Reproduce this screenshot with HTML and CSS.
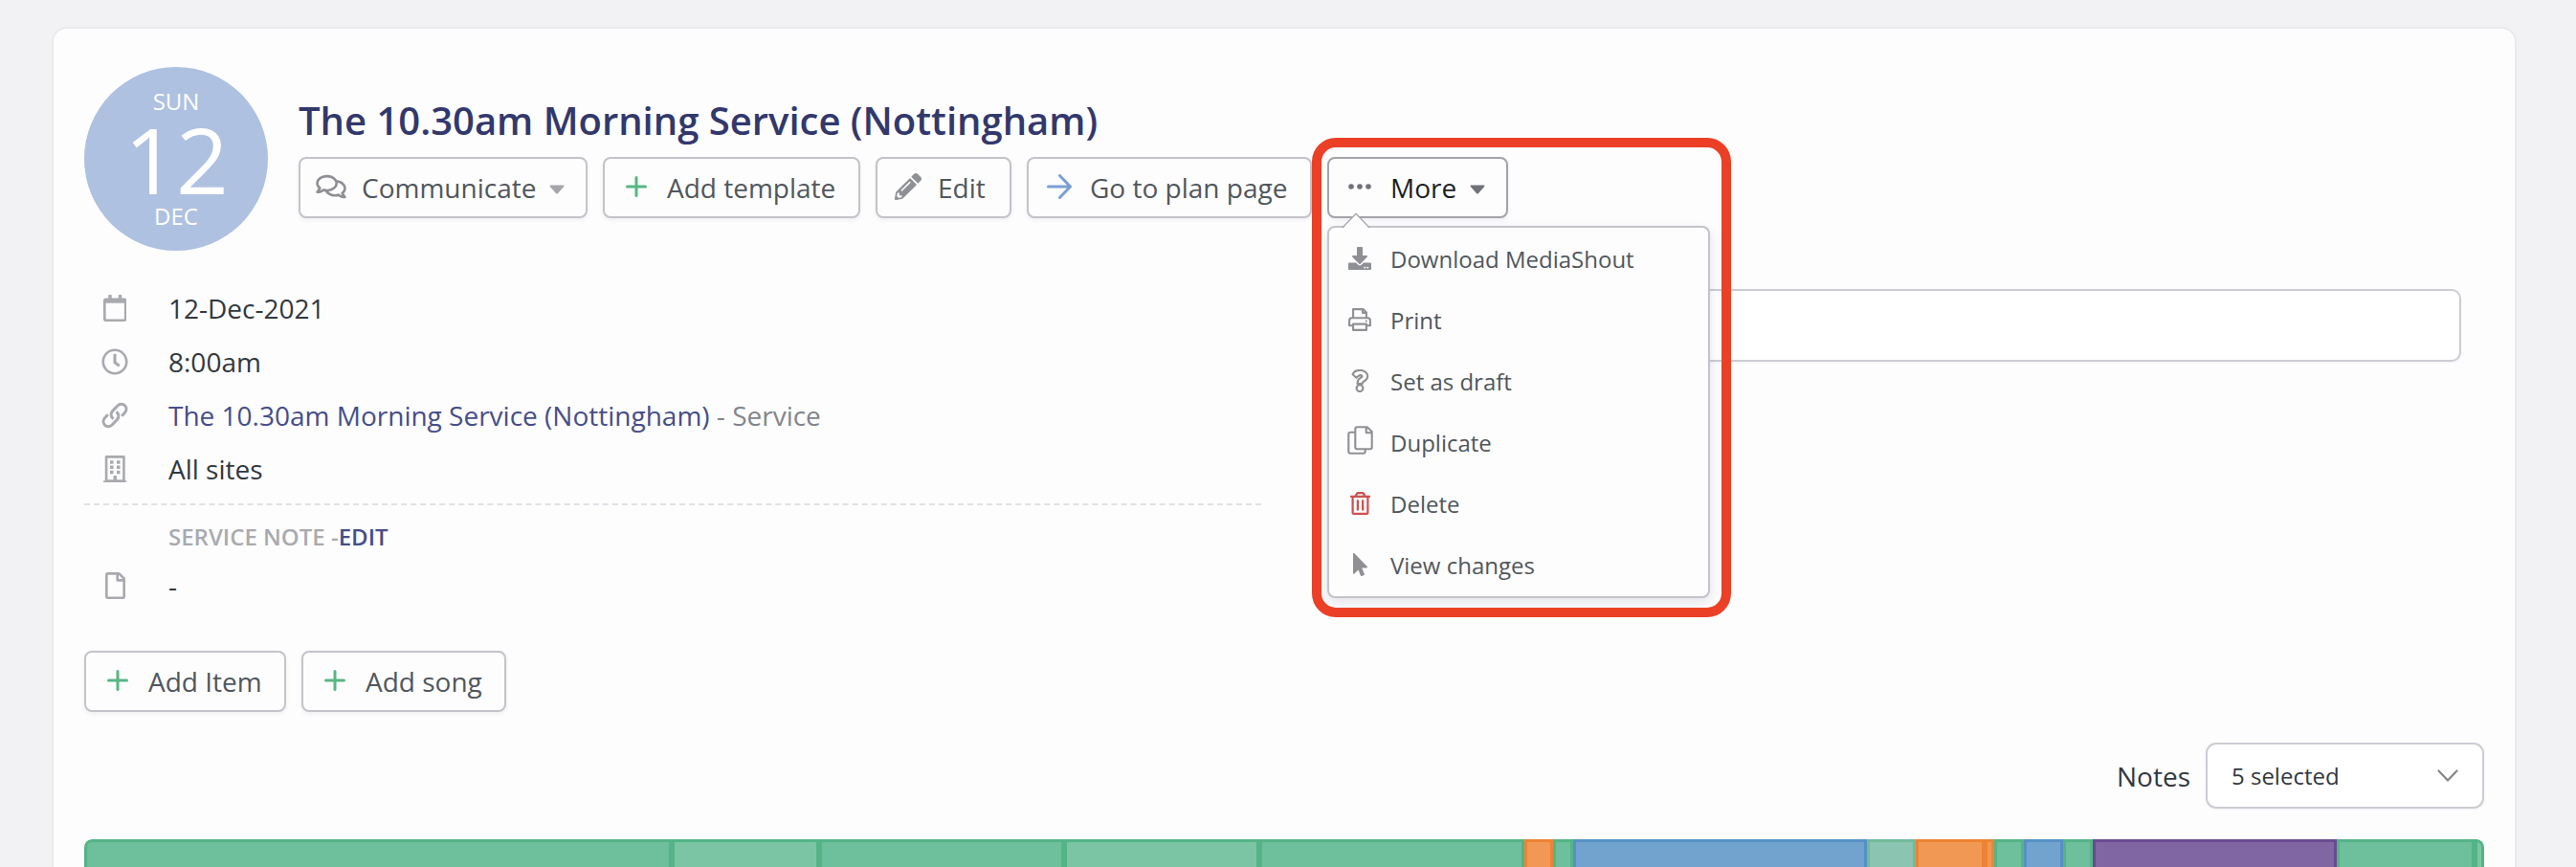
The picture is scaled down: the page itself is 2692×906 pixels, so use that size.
FILE: index.html
```html
<!DOCTYPE html>
<html lang="en">
<head>
<meta charset="utf-8">
<title>The 10.30am Morning Service (Nottingham)</title>
<link rel="stylesheet" href="styles.css">
</head>
<body>
<main class="card">
  <header class="header">
    <div class="date"><span class="date-label">SUN</span><span class="date-day">12</span><span class="date-label">DEC</span></div>
    <div class="heading">
      <h1 class="title"><span>The 10.30am Morning Service (Nottingham)</span></h1>
      <div class="toolbar">
        <button class="btn btn-communicate"><svg class="i-comments" viewBox="0 0 576 512"><path d="M532 386.2c27.5-27.1 44-61.1 44-98.2 0-80-76.5-146.1-176.2-157.9C368.3 72.5 294.3 32 208 32 93.1 32 0 103.6 0 192c0 37 16.5 71 44 98.2-15.3 30.7-37.3 54.5-37.7 54.9-6.3 6.7-8.1 16.5-4.4 25 3.6 8.5 12 14 21.2 14 53.5 0 96.7-20.2 125.2-38.8 9.2 2.1 18.7 3.7 28.4 4.9C208.1 407.6 281.8 448 368 448c20.8 0 40.8-2.4 59.8-6.8C456.3 459.7 499.4 480 553 480c9.2 0 17.5-5.5 21.2-14 3.6-8.5 1.9-18.3-4.4-25-.4-.3-22.5-24.1-37.8-54.8zm-392.8-92.3L122.1 305c-14.1 9.1-28.5 16.3-43.1 21.4 2.7-4.7 5.4-9.7 8-14.8l15.5-31.1L77.7 256C64.2 242.6 48 220.7 48 192c0-60.7 73.3-112 160-112s160 51.3 160 112-73.3 112-160 112c-16.5 0-33-1.9-49-5.6l-19.8-4.5zM498.3 352l-24.7 24.4 15.5 31.1c2.6 5.1 5.3 10.1 8 14.8-14.6-5.1-29-12.3-43.1-21.4l-17.1-11.1-19.9 4.6c-16 3.7-32.5 5.6-49 5.6-54 0-102.2-20.1-131.3-49.7C338 339.5 416 272.9 416 192c0-3.4-.4-6.7-.7-10C479.7 196.5 528 238.8 528 288c0 28.7-16.2 50.6-29.7 64z"/></svg><span>Communicate</span><svg class="caret" viewBox="0 0 16 10"><path d="M1.2.5h13.6q1.2.2.4 1.4L8.8 9.2q-.8.8-1.6 0L.8 1.9Q0 .7 1.2.5z"/></svg></button>
        <button class="btn btn-template"><svg class="i-plus" viewBox="0 0 22 22"><path d="M11 1.5v19M1.5 11h19"/></svg><span>Add template</span></button>
        <button class="btn btn-edit"><svg class="i-pencil" viewBox="0 0 512 512"><path d="M497.9 142.1l-46.1 46.1c-4.7 4.7-12.3 4.7-17 0l-111-111c-4.7-4.7-4.7-12.3 0-17l46.1-46.1c18.7-18.7 49.1-18.7 67.9 0l60.1 60.1c18.8 18.7 18.8 49.1 0 67.9zM284.2 99.8L21.6 362.4.4 483.9c-2.9 16.4 11.4 30.6 27.8 27.8l121.5-21.3 262.6-262.6c4.7-4.7 4.7-12.3 0-17l-111-111c-4.8-4.7-12.4-4.7-17.1 0zM124.1 339.9c-5.5-5.5-5.5-14.3 0-19.8l154-154c5.5-5.5 14.3-5.5 19.8 0s5.5 14.3 0 19.8l-154 154c-5.5 5.5-14.3 5.5-19.8 0zM88 424h48v36.3l-64.5 11.3-31.1-31.1L51.7 376H88v48z"/></svg><span>Edit</span></button>
        <button class="btn btn-plan"><svg class="i-arrow" viewBox="0 0 26 26"><path d="M1.5 13H24M13.5 1.5 24.5 13 13.5 24.5"/></svg><span>Go to plan page</span></button>
        <div class="more">
          <button class="btn btn-more"><svg class="i-dots" viewBox="0 0 24 24"><circle cx="3" cy="12" r="2.8"/><circle cx="12" cy="12" r="2.8"/><circle cx="21" cy="12" r="2.8"/></svg><span>More</span><svg class="caret" viewBox="0 0 16 10"><path d="M1.2.5h13.6q1.2.2.4 1.4L8.8 9.2q-.8.8-1.6 0L.8 1.9Q0 .7 1.2.5z"/></svg></button>
          <div class="menu">
            <svg class="menu-tip" viewBox="0 0 30 18"><path class="tip-fill" d="M0 18 15 1.5 30 18z"/><path class="tip-line" d="M.8 16 15 1.2 29.2 16"/></svg>
            <a class="menu-item"><svg class="mi" viewBox="0 0 512 512"><path d="M216 0h80c13.3 0 24 10.7 24 24v168h87.7c17.8 0 26.7 21.5 14.1 34.1L269.7 378.3c-7.5 7.5-19.8 7.5-27.3 0L90.1 226.1c-12.6-12.6-3.7-34.1 14.1-34.1H192V24c0-13.3 10.7-24 24-24zm296 376v112c0 13.3-10.7 24-24 24H24c-13.3 0-24-10.7-24-24V376c0-13.3 10.7-24 24-24h146.700l49 49c20.100 20.100 52.500 20.100 72.600 0l49-49H488c13.300 0 24 10.700 24 24zm-124 88c0-11-9-20-20-20s-20 9-20 20 9 20 20 20 20-9 20-20zm64 0c0-11-9-20-20-20s-20 9-20 20 9 20 20 20 20-9 20-20z"/></svg><span>Download MediaShout</span></a>
            <a class="menu-item"><svg class="mi line" viewBox="0 0 24 24"><path d="M5.1 10.5V1.1h10.4l3.4 3.4v6M15 1.5V5h3.6M4.5 18.2H1.1v-5.4q0-2.6 2.6-2.6h16.6q2.6 0 2.6 2.6v5.4h-3.4M5.1 16.6h13.8v6.3H5.1z"/><circle class="dot" cx="18.8" cy="13.5" r="1.1"/></svg><span>Print</span></a>
            <a class="menu-item"><svg class="mi line" viewBox="0 0 24 24"><path d="M4.6 5.2C5.7 2.4 8.6.9 12.2.9c4.3 0 8 2.5 8 6.1 0 3.700-2.700 4.900-4.700 6.100-.8.5-.9 1.200-.9 2h-4.900c-.3-3.500.6-4.900 3.100-6.300 1.700-.9 2-1.300 1.500-2-.7-1-2.900-1-4.100.4L8.500 8.800z"/><circle cx="12" cy="19.700" r="3.400"/></svg><span>Set as draft</span></a>
            <a class="menu-item"><svg class="mi-copy line" viewBox="0 0 27 30"><path d="M10.300 1.200h10.400L25.700 6v16.200q0 2-2 2h-13.400q-2 0-2-2V3.200q0-2 2-2zM19.700 1.500v5.700h5.700M8 6.700H3.300q-2 0-2 2v18q0 2 2 2h13.400q2 0 2-2v-2.300"/></svg><span>Duplicate</span></a>
            <a class="menu-item"><svg class="mi trash" viewBox="0 0 448 512"><path d="M268 416h24a12 12 0 0 0 12-12V188a12 12 0 0 0-12-12h-24a12 12 0 0 0-12 12v216a12 12 0 0 0 12 12zM432 80h-82.410l-34-56.700A48 48 0 0 0 274.410 0H173.590a48 48 0 0 0-41.160 23.300L98.410 80H16A16 16 0 0 0 0 96v16a16 16 0 0 0 16 16h16v336a48 48 0 0 0 48 48h288a48 48 0 0 0 48-48V128h16a16 16 0 0 0 16-16V96a16 16 0 0 0-16-16zM171.840 50.910A6 6 0 0 1 177 48h94a6 6 0 0 1 5.150 2.910L293.610 80H154.390zM368 464H80V128h288zm-212-48h24a12 12 0 0 0 12-12V188a12 12 0 0 0-12-12h-24a12 12 0 0 0-12 12v216a12 12 0 0 0 12 12z"/></svg><span>Delete</span></a>
            <a class="menu-item"><svg class="mi" viewBox="0 0 320 512"><path d="M302.189 329.126H196.105l55.831 135.993c3.889 9.428-.555 19.999-9.444 23.999l-49.165 21.427c-9.165 4-19.443-.571-23.332-9.714l-53.053-129.136-86.664 89.138C18.729 472.710 0 463.554 0 447.977V18.299C0 1.899 19.921-6.096 30.277 5.443l284.412 292.542c11.472 11.179 3.007 31.141-12.500 31.141z"/></svg><span>View changes</span></a>
          </div>
          <div class="highlight"></div>
        </div>
      </div>
    </div>
  </header>

  <section class="details">
    <div class="info">
      <div class="row"><svg class="ri" viewBox="0 0 448 512"><path d="M400 64h-48V12c0-6.600-5.400-12-12-12h-40c-6.600 0-12 5.400-12 12v52H160V12c0-6.600-5.400-12-12-12h-40c-6.600 0-12 5.400-12 12v52H48C21.500 64 0 85.500 0 112v352c0 26.500 21.500 48 48 48h352c26.500 0 48-21.500 48-48V112c0-26.500-21.500-48-48-48zm-6 400H54c-3.300 0-6-2.700-6-6V160h352v298c0 3.300-2.700 6-6 6z"/></svg><span>12-Dec-2021</span></div>
      <div class="row"><svg class="ri" viewBox="0 0 512 512"><path d="M256 8C119 8 8 119 8 256s111 248 248 248 248-111 248-248S393 8 256 8zm0 448c-110.500 0-200-89.500-200-200S145.500 56 256 56s200 89.500 200 200-89.500 200-200 200zm61.800-104.400l-84.900-61.700c-3.100-2.300-4.900-5.900-4.900-9.700V116c0-6.600 5.400-12 12-12h32c6.600 0 12 5.400 12 12v141.700l66.800 48.600c5.400 3.900 6.500 11.400 2.600 16.800L334.600 349c-3.900 5.300-11.400 6.500-16.800 2.600z"/></svg><span>8:00am</span></div>
      <div class="row"><svg class="ri link-icon" viewBox="0 0 28 28"><path d="M12.600 17.600c-2.800-1.700-3.500-5.500-1.100-8L16.900 4c2.100-2.100 5.300-2.200 7.400-.3 2.100 2 2.200 5.300.2 7.500l-3.300 3.500"/><path d="M15.400 10.400c2.800 1.700 3.500 5.500 1.100 8L11.100 24c-2.100 2.100-5.300 2.200-7.400.3-2.100-2-2.200-5.300-.2-7.500l3.300-3.500"/></svg><span><a class="link">The 10.30am Morning Service (Nottingham)</a><span class="muted"> - Service</span></span></div>
      <div class="row"><svg class="ri" viewBox="0 0 448 512"><path fill-rule="evenodd" d="M56 0h336q24 0 24 24v456h20q12 0 12 12v20H0v-20q0-12 12-12h20V24Q32 0 56 0zM80 48v415h112v-67q0-12 12-12h40q12 0 12 12v67h112V48z"/><path d="M128 96h64v64h-64zM256 96h64v64h-64zM128 192h64v64h-64zM256 192h64v64h-64zM128 288h64v64h-64zM256 288h64v64h-64z"/></svg><span>All sites</span></div>
      <svg class="divider" viewBox="0 0 1230 2"><path d="M0 1H1230"/></svg>
      <div class="note-title"><span>SERVICE NOTE -<a class="note-edit">EDIT</a></span></div>
      <div class="row row-note"><svg class="ri" viewBox="0 0 384 512"><path d="M369.900 97.900L286 14C277 5 264.800-.1 252.100-.1H48C21.500 0 0 21.500 0 48v416c0 26.500 21.500 48 48 48h288c26.500 0 48-21.500 48-48V131.900c0-12.700-5.100-25-14.100-34zM332.100 128H256V51.900l76.100 76.100zM48 464V48h160v104c0 13.300 10.700 24 24 24h104v288H48z"/></svg><span>-</span></div>
    </div>
    <div class="field"></div>
  </section>

  <div class="actions">
    <button class="btn btn-item"><svg class="i-plus" viewBox="0 0 22 22"><path d="M11 1.500v19M1.500 11h19"/></svg><span>Add Item</span></button>
    <button class="btn btn-song"><svg class="i-plus" viewBox="0 0 22 22"><path d="M11 1.500v19M1.500 11h19"/></svg><span>Add song</span></button>
  </div>

  <div class="notes">
    <label class="notes-label">Notes</label>
    <div class="select"><span>5 selected</span><svg class="chevron" viewBox="0 0 22 14"><path d="M1.500 1.500 11 11.500 20.500 1.500"/></svg></div>
  </div>

  <div class="timeline">
    <div class="seg green" style="width:614px"></div>
    <div class="seg green light" style="width:154px"></div>
    <div class="seg green" style="width:256px"></div>
    <div class="seg green light" style="width:204px"></div>
    <div class="seg green" style="width:277px"></div>
    <div class="seg orange" style="width:30px"></div>
    <div class="seg green" style="width:21px"></div>
    <div class="seg blue" style="width:307px"></div>
    <div class="seg pale" style="width:51px"></div>
    <div class="seg orange" style="width:72px"></div>
    <div class="seg orange" style="width:10px"></div>
    <div class="seg green" style="width:31px"></div>
    <div class="seg blue" style="width:41px"></div>
    <div class="seg green" style="width:31px"></div>
    <div class="seg purple" style="width:255px"></div>
    <div class="seg green" style="width:144px"></div>
    <div class="seg green light" style="width:10px"></div>
  </div>
</main>
</body>
</html>
```
FILE: styles.css
```css
* { box-sizing: border-box; }
html, body { height: 100%; }
body {
  margin: 0;
  padding: 30px 64px 0 56px;
  overflow: hidden;
  background: #f2f2f5;
  color: #32383e;
  font-family: "Open Sans", "Noto Sans", sans-serif;
  font-size: 28px;
}
svg { display: block; flex: none; fill: currentColor; }
span, a, label { white-space: nowrap; }

.card {
  height: 940px;
  padding: 40px 32px 0;
  background: #fdfdfe;
  border-radius: 14px;
  box-shadow: 0 0 0 2px #eaeaed;
}

.header { display: flex; gap: 32px; }
.date {
  display: flex;
  flex-direction: column;
  align-items: center;
  width: 192px;
  height: 192px;
  padding-top: 22px;
  border-radius: 50%;
  background: #aec1e1;
  color: #fff;
}
.date-label { font-size: 24px; line-height: 28px; }
.date-day { font-size: 96px; line-height: 92px; letter-spacing: -1px; }
.heading { display: flex; flex-direction: column; }
.title {
  margin: 0;
  padding-top: 29px;
  height: 94px;
  color: #32386c;
  font-size: 40px;
  font-weight: 600;
  line-height: 54px;
}
.toolbar { display: flex; gap: 16px; }

.btn {
  display: flex;
  align-items: center;
  height: 64px;
  margin: 0;
  padding: 0 0 2px 22px;
  border: 2px solid #c3c3c9;
  border-radius: 8px;
  background: #fdfdfe;
  box-shadow: 0 2px 4px rgba(60, 60, 100, .07);
  color: #50575c;
  font-family: inherit;
  font-size: 28px;
}
.btn span { margin-top: 2px; }
.btn-communicate { width: 302px; padding-left: 16px; }
.btn-template { width: 269px; }
.btn-edit { width: 142px; padding-left: 18px; }
.btn-plan { width: 298px; padding-left: 19px; }
.btn-more {
  width: 189px;
  padding-left: 20px;
  border-color: #a3a4a9;
  color: #1c1f24;
}
.btn-item { width: 211px; }
.btn-song { width: 214px; }
.i-comments { width: 32px; height: 28px; margin-right: 16px; color: #8f9095; }
.i-plus { width: 22px; height: 22px; margin-right: 21px; fill: none; stroke: #58b683; stroke-width: 3; stroke-linecap: round; }
.i-pencil { width: 28px; height: 28px; margin-right: 17px; color: #8f9095; }
.i-arrow { width: 26px; height: 26px; margin-right: 19px; fill: none; stroke: #7b9fd3; stroke-width: 3; stroke-linecap: round; stroke-linejoin: round; }
.i-dots { width: 24px; height: 24px; margin-right: 20px; color: #717278; }
.caret { width: 16px; height: 10px; margin: 5px 0 0 14px; color: #a5a6aa; }
.btn-more .caret { color: #717278; }

.more { position: relative; }
.menu {
  position: absolute;
  z-index: 2;
  top: 72px;
  left: 0;
  width: 400px;
  height: 389px;
  border: 2px solid #c3c3c9;
  border-radius: 8px;
  background: #fdfdfe;
  box-shadow: 0 4px 12px rgba(60, 60, 110, .15);
}
.menu-tip { position: absolute; top: -16px; left: 13px; width: 30px; height: 18px; }
.tip-fill { fill: #fdfdfe; }
.tip-line { fill: none; stroke: #a9a9af; stroke-width: 1.3; }
.menu-item {
  display: grid;
  grid-template-columns: 64px 1fr;
  align-items: center;
  height: 64px;
  color: #50575c;
  font-size: 24px;
}
.menu-item svg { justify-self: center; color: #8f9095; }
.mi { height: 24px; }
.mi-copy { width: 27px; height: 30px; margin-top: -4px; }
.menu-item .trash { color: #cf5150; }
.line { fill: none; stroke: currentColor; stroke-width: 2.1; stroke-linejoin: round; }
.dot { fill: currentColor; stroke: none; }
.highlight {
  position: absolute;
  z-index: 3;
  top: -20px;
  left: -16px;
  width: 438px;
  height: 501px;
  border: 10px solid #eb4025;
  border-radius: 25px;
}

.details { display: flex; gap: 70px; margin-top: 32px; padding-right: 24px; }
.info { width: 1230px; height: 386px; }
.row { display: grid; grid-template-columns: 64px 1fr; column-gap: 24px; align-items: center; height: 56px; }
.ri { height: 28px; justify-self: center; color: #a9aaaf; }
.link-icon { fill: none; stroke: currentColor; stroke-width: 3; stroke-linecap: butt; }
.link { color: #464e8a; }
.muted { color: #83858c; }
.divider { width: 1230px; height: 2px; margin-top: 8px; stroke: #e2e0e6; stroke-width: 2; stroke-dasharray: 6 4.033; }
.note-title { padding: 15px 0 0 88px; height: 56px; line-height: 36px; font-size: 24px; font-weight: 600; color: #a9aaaf; }
.note-edit { color: #464e8a; }
.field {
  flex: 1;
  height: 76px;
  margin-top: 8px;
  border: 2px solid #cdccd3;
  border-radius: 10px;
  background: #fff;
  box-shadow: 0 1px 3px rgba(60, 60, 100, .05);
}

.actions { display: flex; gap: 16px; }
.notes { display: flex; justify-content: flex-end; align-items: center; gap: 16px; margin-top: 32px; }
.select {
  display: flex;
  align-items: center;
  justify-content: space-between;
  width: 291px;
  height: 69px;
  padding: 0 25px;
  border: 2px solid #cdccd3;
  border-radius: 11px;
  background: #fff;
  box-shadow: 0 1px 3px rgba(60, 60, 100, .05);
  font-size: 24px;
}
.chevron { width: 22px; height: 14px; fill: none; stroke: #85868b; stroke-width: 2.2; stroke-linejoin: round; stroke-linecap: round; }

.timeline { display: flex; height: 80px; margin-top: 32px; border-radius: 8px; overflow: hidden; }
.seg { flex: none; border: 3px solid; }
.seg:first-child { border-top-left-radius: 8px; }
.seg:last-child { border-top-right-radius: 8px; }
.green { border-color: #54b487; background: #6ebf9b; }
.light { background: #7bc5a4; }
.orange { border-color: #ed8335; background: #f09854; }
.blue { border-color: #5790c5; background: #72a3cf; }
.pale { border-color: #73b99c; background: #8bc4b0; }
.purple { border-color: #694b92; background: #8066a2; }
```
